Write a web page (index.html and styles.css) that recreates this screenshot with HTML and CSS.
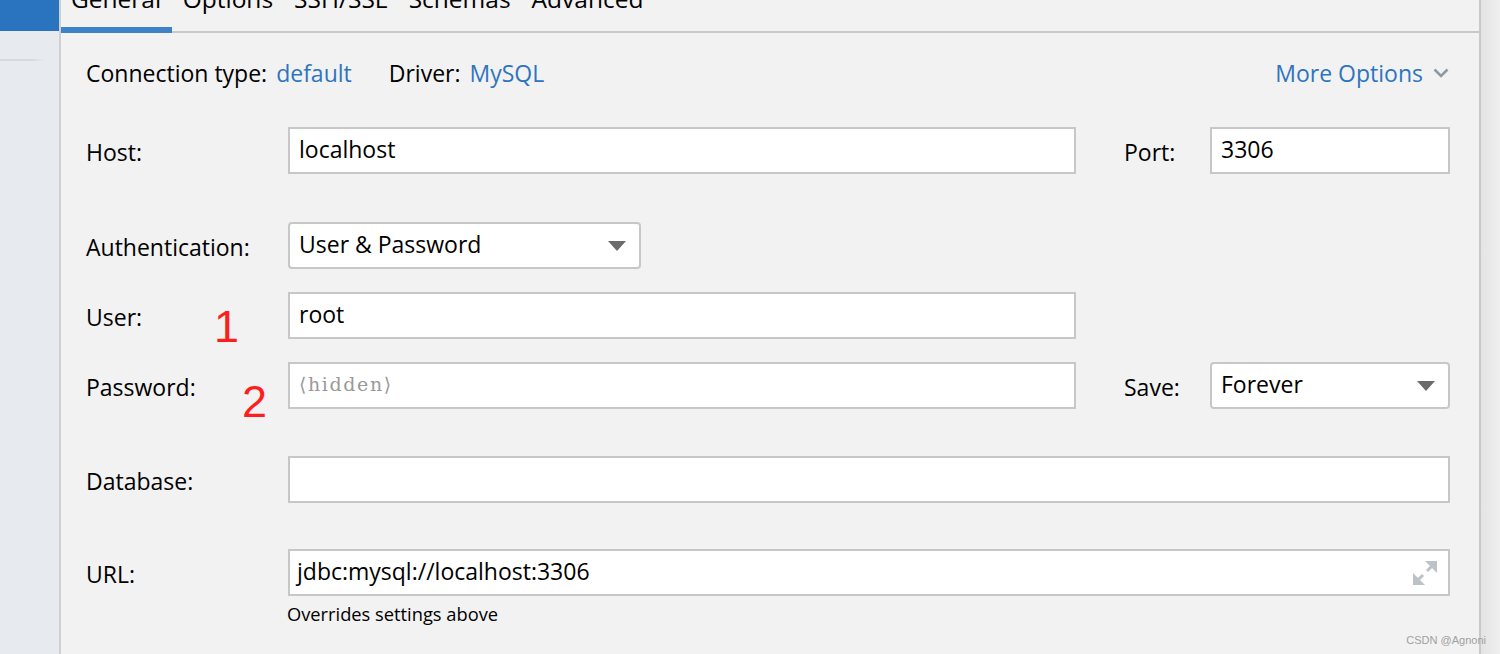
FILE: index.html
```html
<!DOCTYPE html>
<html>
<head>
<meta charset="utf-8">
<link rel="stylesheet" href="styles.css">
</head>
<body>
<div class="window">
  <aside class="sidebar">
    <div class="side-item selected"></div>
    <div class="side-sep"></div>
  </aside>
  <main class="panel">
    <nav class="tabs">
      <div class="tab active">General</div>
      <div class="tab">Options</div>
      <div class="tab">SSH/SSL</div>
      <div class="tab">Schemas</div>
      <div class="tab">Advanced</div>
    </nav>
    <section class="form">
      <div class="topline">
        <span class="k">Connection type:</span><span class="link">default</span>
        <span class="k driver">Driver:</span><span class="link">MySQL</span>
        <span class="more link">More Options
          <svg class="chev" viewBox="0 0 16 10" width="16" height="10"><path d="M1.5 1.5 L8 8 L14.5 1.5" fill="none" stroke="#8d9aa6" stroke-width="2.6"/></svg>
        </span>
      </div>

      <div class="row host">
        <label class="lbl">Host:</label>
        <div class="field w-main">localhost</div>
        <span></span>
        <label class="lbl">Port:</label>
        <div class="field">3306</div>
      </div>

      <div class="row auth">
        <label class="lbl">Authentication:</label>
        <div class="select w-auth">User &amp; Password<span class="tri"></span></div>
      </div>

      <div class="row user">
        <label class="lbl anno-cell">User:<span class="anno one">1</span></label>
        <div class="field w-main">root</div>
      </div>

      <div class="row pwd">
        <label class="lbl anno-cell">Password:<span class="anno two">2</span></label>
        <div class="field w-main placeholder">&#x27E8;hidden&#x27E9;</div>
        <span></span>
        <label class="lbl">Save:</label>
        <div class="select">Forever<span class="tri"></span></div>
      </div>

      <div class="row db">
        <label class="lbl">Database:</label>
        <div class="field w-full"></div>
      </div>

      <div class="row url">
        <label class="lbl">URL:</label>
        <div class="field w-full url-field"><span>jdbc:mysql://localhost:3306</span>
          <svg class="expand" viewBox="0 0 24 24" width="24" height="24">
            <polygon points="12,0 24,0 24,12" fill="#bcc2c7"/>
            <line x1="21" y1="3" x2="14" y2="10" stroke="#bcc2c7" stroke-width="3"/>
            <polygon points="0,12 0,24 12,24" fill="#bcc2c7"/>
            <line x1="3" y1="21" x2="10" y2="14" stroke="#bcc2c7" stroke-width="3"/>
          </svg>
        </div>
      </div>
      <div class="row note">
        <span></span>
        <div class="hint">Overrides settings above</div>
      </div>
    </section>
    <div class="watermark">CSDN @Agnoni</div>
  </main>
  <div class="edge"></div>
</div>
</body>
</html>
```

FILE: styles.css
```css
html, body {
  margin: 0;
  padding: 0;
  height: 100%;
  overflow: hidden;
}
body {
  font-family: "Open Sans", "Noto Sans", sans-serif;
  font-size: 23px;
  color: #000;
  background: #f2f2f2;
}
.window {
  display: flex;
  height: 654px;
}
.sidebar {
  width: 59px;
  flex: none;
  background: #e7ebef;
  border-right: 2px solid #cfd0d1;
}
.side-item.selected {
  height: 31px;
  background: #2a74bf;
}
.side-sep {
  margin-top: 28px;
  height: 2px;
  width: 45px;
  background: linear-gradient(to right, #d7d9dc 70%, rgba(215,217,220,0));
}
.panel {
  position: relative;
  width: 1418px;
  flex: none;
  background: #f2f2f2;
  border-right: 2px solid #c9c9c9;
}
.edge {
  flex: 1;
  background: linear-gradient(to right, #e4e4e4, #efefef);
}
.tabs {
  display: flex;
  align-items: stretch;
  height: 45px;
  margin-top: -14px;
  border-bottom: 2px solid #c9c9c9;
}
.tab {
  box-sizing: border-box;
  padding: 0 10.5px;
  font-size: 24.5px;
  line-height: 26px;
  white-space: nowrap;
}
.tab.active {
  border-bottom: 6px solid #3e82c8;
  margin-bottom: -2px;
  padding-left: 10px;
  padding-right: 11px;
}
.form {
  padding: 0 29px 0 25px;
}
.link { color: #2f74bf; }
.topline {
  display: flex;
  align-items: center;
  height: 30px;
  margin-top: 25px;
  white-space: nowrap;
}
.topline .k { margin-right: 9px; }
.topline .driver { margin-left: 37px; }
.more {
  margin-left: auto;
  display: flex;
  align-items: center;
  gap: 10px;
  padding-right: 1px;
}
.chev { display: block; }

.row {
  display: grid;
  grid-template-columns: 202px 788px 48px 86px 240px;
  align-items: center;
  height: 47px;
}
.row.host { margin-top: 39px; }
.row.auth { margin-top: 48px; }
.row.user { margin-top: 23px; }
.row.pwd { margin-top: 23px; }
.row.db { margin-top: 47px; }
.row.url { margin-top: 46px; }
.row.note { margin-top: 6px; height: 24px; }

.lbl {
  white-space: nowrap;
  padding-top: 3px;
}
.field, .select {
  box-sizing: border-box;
  height: 47px;
  background: #fff;
  border: 2px solid #c7c7c7;
  padding: 0 9px;
  display: flex;
  align-items: center;
  padding-bottom: 3px;
  white-space: nowrap;
}
.w-full { grid-column: 2 / 6; }
.w-auth { width: 353px; }
.select {
  border-radius: 4px;
  justify-content: space-between;
  padding-right: 13px;
}
.tri {
  width: 0;
  height: 0;
  border-left: 9px solid transparent;
  border-right: 9px solid transparent;
  border-top: 10px solid #6b6b6b;
  margin-top: 3px;
}
.placeholder {
  font-family: "DejaVu Serif", "Liberation Serif", serif;
  font-size: 19px;
  color: #9a9a9a;
  letter-spacing: 1.6px;
}
.url-field {
  justify-content: space-between;
  padding-left: 7px;
  padding-right: 11px;
}
.expand { display: block; margin-top: 3px; }
.hint {
  font-size: 18.3px;
  line-height: 24px;
  margin-left: -1px;
}
.anno-cell { position: relative; }
.anno {
  position: absolute;
  color: #ff1e1e;
  font-family: "Liberation Sans", Arial, sans-serif;
  font-size: 45px;
  line-height: 1;
}
.anno.one { left: 128px; top: 6px; }
.anno.two { left: 156px; top: 11px; }
.watermark {
  position: absolute;
  right: -7px;
  bottom: 8px;
  font-family: "Liberation Sans", Arial, sans-serif;
  font-size: 11px;
  color: #a0a0a0;
  white-space: nowrap;
  z-index: 2;
}
```
